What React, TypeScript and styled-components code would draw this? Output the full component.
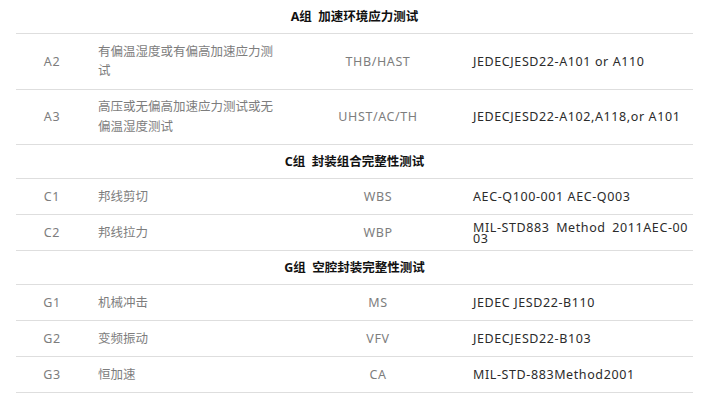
import styled, { createGlobalStyle } from 'styled-components';

const GlobalStyle = createGlobalStyle`
  html, body {
    margin: 0;
    padding: 0;
    background: #fff;
  }
  body {
    font-family: 'Noto Sans', 'Noto Sans CJK SC', sans-serif;
  }
`;

const Page = styled.div`
  padding: 0 27px 0 16px;
`;

const Table = styled.table`
  width: 677px;
  border-collapse: collapse;
  table-layout: fixed;
  font-size: 12.5px;
`;

const GroupCell = styled.td`
  height: 33px;
  padding: 0;
  text-align: center;
  font-weight: 700;
  color: #111;
  line-height: 19px;
  border-bottom: 1px solid #dedede;
  white-space: pre;
`;

type Kind = 'code' | 'name' | 'abbr' | 'std';

const Cell = styled.td<{ $kind: Kind }>`
  padding: ${(p) => (p.$kind === 'std' ? '6px 5px' : p.$kind === 'name' ? '7.75px 10px' : '7.75px 0')};
  line-height: ${(p) => (p.$kind === 'std' ? '11px' : '19.5px')};
  letter-spacing: ${(p) => (p.$kind === 'name' ? '0' : '0.6px')};
  color: ${(p) => (p.$kind === 'std' ? '#2b2b2b' : '#7d7d7d')};
  text-align: ${(p) => (p.$kind === 'code' || p.$kind === 'abbr' ? 'center' : p.$kind === 'std' ? 'justify' : 'left')};
  vertical-align: middle;
  border-bottom: 1px solid #dedede;
  word-break: ${(p) => (p.$kind === 'std' ? 'break-all' : 'normal')};
`;

const Row = styled.tr`
  height: 36px;
`;

type Item = { code: string; name: string; abbr: string; std: string };
type Group = { title: string; items: Item[] };

const groups: Group[] = [
  {
    title: 'A组  加速环境应力测试',
    items: [
      { code: 'A2', name: '有偏温湿度或有偏高加速应力测试', abbr: 'THB/HAST', std: 'JEDECJESD22-A101 or A110' },
      { code: 'A3', name: '高压或无偏高加速应力测试或无偏温湿度测试', abbr: 'UHST/AC/TH', std: 'JEDECJESD22-A102,A118,or A101' },
    ],
  },
  {
    title: 'C组  封装组合完整性测试',
    items: [
      { code: 'C1', name: '邦线剪切', abbr: 'WBS', std: 'AEC-Q100-001 AEC-Q003' },
      { code: 'C2', name: '邦线拉力', abbr: 'WBP', std: 'MIL-STD883 Method 2011AEC-0003' },
    ],
  },
  {
    title: 'G组  空腔封装完整性测试',
    items: [
      { code: 'G1', name: '机械冲击', abbr: 'MS', std: 'JEDEC JESD22-B110' },
      { code: 'G2', name: '变频振动', abbr: 'VFV', std: 'JEDECJESD22-B103' },
      { code: 'G3', name: '恒加速', abbr: 'CA', std: 'MIL-STD-883Method2001' },
    ],
  },
];

export default function App() {
  return (
    <Page>
      <GlobalStyle />
      <Table>
        <colgroup>
          <col style={{ width: 72 }} />
          <col style={{ width: 200 }} />
          <col style={{ width: 180 }} />
          <col style={{ width: 225 }} />
        </colgroup>
        <tbody>
          {groups.map((g) => [
            <tr key={g.title}>
              <GroupCell colSpan={4}>{g.title}</GroupCell>
            </tr>,
            ...g.items.map((it) => (
              <Row key={it.code}>
                <Cell $kind='code'>{it.code}</Cell>
                <Cell $kind='name'>{it.name}</Cell>
                <Cell $kind='abbr'>{it.abbr}</Cell>
                <Cell $kind='std'>{it.std}</Cell>
              </Row>
            )),
          ])}
        </tbody>
      </Table>
    </Page>
  );
}
